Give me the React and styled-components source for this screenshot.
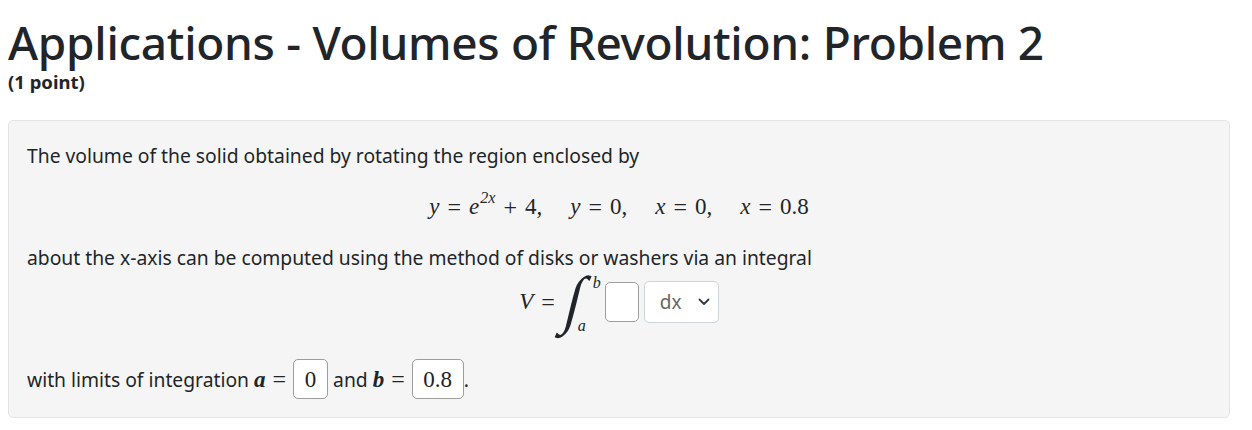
import React from 'react'
import styled, { createGlobalStyle } from 'styled-components'

const Global = createGlobalStyle`
  body {
    margin: 8px;
    background: #fff;
    color: #212529;
    font-family: "Noto Sans", "Open Sans", sans-serif;
  }
`

const Title = styled.h1`
  margin: 8px 0 0;
  font-size: 46px;
  font-weight: 500;
  line-height: 52px;
  letter-spacing: -0.3px;
`

const Points = styled.div`
  font-size: 18.5px;
  font-weight: 700;
  line-height: 24px;
  margin-top: 2px;
`

const Panel = styled.div`
  margin-top: 26px;
  width: 1222px;
  box-sizing: border-box;
  background: #f5f5f5;
  border: 1px solid #e4e4e4;
  border-radius: 5px;
  padding: 21px 18px 18px;
`

const Para = styled.p`
  margin: ${p => p.$top || 0}px 0 0;
  font-size: 19.3px;
  line-height: 27px;
  display: flex;
  align-items: center;
  white-space: pre;
`

const Display = styled.div`
  margin-top: ${p => p.$top || 0}px;
  height: ${p => p.$h}px;
  display: flex;
  align-items: center;
  justify-content: center;
  font-family: "Liberation Serif", "DejaVu Serif", serif;
  font-size: 23px;
`

const Var = styled.i`
  font-style: italic;
  font-weight: ${p => (p.$bold ? 700 : 400)};
  font-family: "Liberation Serif", "DejaVu Serif", serif;
  font-size: 23px;
`

const Op = styled.span`
  font-family: "Liberation Serif", "DejaVu Serif", serif;
  font-size: 24px;
  padding: 0 ${p => p.$pad ?? 8}px;
`

const Sup = styled.span`
  font-size: 16px;
  font-style: italic;
  position: relative;
  top: -9px;
  margin-left: 1px;
`

const Quad = styled.span`
  display: inline-block;
  width: 28px;
`

const Integral = styled.span`
  position: relative;
  display: inline-block;
  width: 40px;
  height: 58px;
`

const IntSign = styled.span`
  position: absolute;
  left: 3px;
  top: -8px;
  font-family: "Liberation Serif", serif;
  font-size: 64px;
  line-height: 70px;
  transform: skewX(-14deg) scaleX(0.9);
`

const Limit = styled.i`
  position: absolute;
  font-family: "Liberation Serif", serif;
  font-size: 16px;
  line-height: 16px;
  left: ${p => p.$x}px;
  top: ${p => p.$y}px;
`

const Box = styled.span`
  display: inline-flex;
  align-items: center;
  justify-content: center;
  box-sizing: border-box;
  width: ${p => p.$w}px;
  height: 40px;
  margin: 0 ${p => p.$mr || 0}px 0 ${p => p.$ml || 0}px;
  background: #fff;
  border: 1px solid #9d9d9d;
  border-radius: 5px;
  font-family: "Liberation Serif", serif;
  font-size: 23px;
  color: #222;
`

const SelectWrap = styled.span`
  position: relative;
  display: inline-flex;
  align-items: center;
  box-sizing: border-box;
  width: 75px;
  height: 42px;
  margin-left: 5px;
  padding-left: 15px;
  background: #fff;
  border: 1px solid #ced4da;
  border-radius: 5px;
  font-family: "Noto Sans", sans-serif;
  font-size: 19px;
  color: #666;
`

const Chevron = styled.svg`
  position: absolute;
  right: 8px;
  top: 16px;
`

export default function App() {
  return (
    <>
      <Global />
      <Title>Applications - Volumes of Revolution: Problem 2</Title>
      <Points>(1 point)</Points>
      <Panel>
        <Para>The volume of the solid obtained by rotating the region enclosed by</Para>
        <Display $top={23} $h={30}>
          <Var>y</Var><Op>=</Op><Var>e</Var><Sup>2x</Sup><Op>+</Op>4,
          <Quad />
          <Var>y</Var><Op>=</Op>0,
          <Quad />
          <Var>x</Var><Op>=</Op>0,
          <Quad />
          <Var>x</Var><Op>=</Op>0.8
        </Display>
        <Para $top={22}>about the x-axis can be computed using the method of disks or washers via an integral</Para>
        <Display $top={2} $h={58}>
          <Var>V</Var><Op>=</Op>
          <Integral>
            <IntSign>∫</IntSign>
            <Limit $x={30} $y={2}>b</Limit>
            <Limit $x={15} $y={45}>a</Limit>
          </Integral>
          <Box $w={34} $ml={2} />
          <SelectWrap>
            dx
            <Chevron width="12" height="8" viewBox="0 0 12 8">
              <path d="M1.5 1.5 L6 6 L10.5 1.5" fill="none" stroke="#343a40" strokeWidth="1.8" strokeLinecap="round" strokeLinejoin="round" />
            </Chevron>
          </SelectWrap>
        </Display>
        <Para $top={28}>
          {'with limits of integration '}
          <Var $bold>a</Var><Op $pad={7}>=</Op>
          <Box $w={35}>0</Box>
          {' and '}
          <Var $bold>b</Var><Op $pad={7}>=</Op>
          <Box $w={52}>0.8</Box>
          {'.'}
        </Para>
      </Panel>
    </>
  )
}
